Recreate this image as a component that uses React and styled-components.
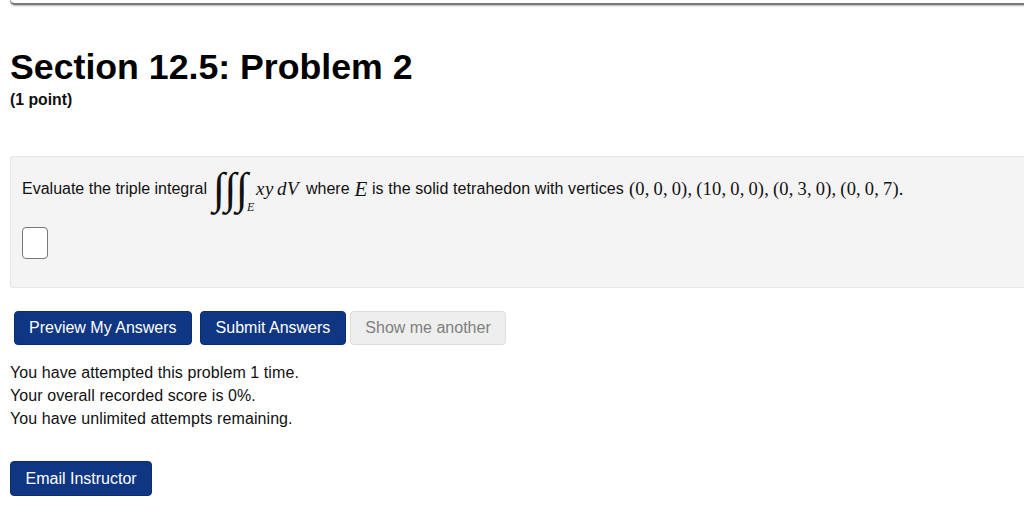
import styled, { createGlobalStyle } from "styled-components"

const Global = createGlobalStyle`
  html, body {
    margin: 0;
    padding: 0;
    background: #fff;
    overflow: hidden;
  }
  body {
    font-family: "Liberation Sans", Arial, sans-serif;
    color: #111;
  }
`

const App = () => {
  return (
    <Page>
      <Global />
      <TopEdge />
      <Heading>Section 12.5: Problem 2</Heading>
      <Points>(1 point)</Points>
      <ProblemBox>
        <Statement>
          Evaluate the triple integral
          <Integrals>
            <span>∫</span>
            <span>∫</span>
            <span>∫</span>
            <Sub>E</Sub>
          </Integrals>
          <MathVar>xy</MathVar>
          <MathVar $left="3px">dV</MathVar>
          <Text $left="7px">where</Text>
          <MathVar $left="5px" $size="21px">E</MathVar>
          <Text $left="4px" $track="0.08px">is the solid tetrahedon with vertices</Text>
          <MathNum>(0, 0, 0), (10, 0, 0), (0, 3, 0), (0, 0, 7).</MathNum>
        </Statement>
        <AnswerInput type="text" aria-label="answer" />
      </ProblemBox>
      <ButtonRow>
        <Button>Preview My Answers</Button>
        <Button $pad="15px">Submit Answers</Button>
        <GreyButton disabled>Show me another</GreyButton>
      </ButtonRow>
      <Status>
        <div>You have attempted this problem 1 time.</div>
        <div>Your overall recorded score is 0%.</div>
        <div>You have unlimited attempts remaining.</div>
      </Status>
      <EmailButton $pad="14.5px">Email Instructor</EmailButton>
    </Page>
  )
}

export default App

const Page = styled.div`
  width: 1024px;
  height: 529px;
  overflow: hidden;
  padding-left: 10px;
  box-sizing: border-box;
`
const TopEdge = styled.div`
  height: 3px;
  margin-right: -10px;
  background: #fff;
  border-left: 1px solid #999;
  border-bottom: 2px solid #777;
  border-bottom-left-radius: 5px;
  box-shadow: 0 1px 2px rgba(0, 0, 0, 0.3);
`
const Heading = styled.h1`
  margin: 42px 0 0;
  font-size: 35.7px;
  line-height: 40px;
  font-weight: 700;
  color: #000;
`
const Points = styled.div`
  margin-top: 4px;
  font-size: 15.8px;
  line-height: 18px;
  font-weight: 700;
  color: #111;
`
const ProblemBox = styled.div`
  margin-top: 47px;
  margin-right: -10px;
  height: 132px;
  box-sizing: border-box;
  padding: 11px 0 0 11px;
  background: #f4f4f4;
  border: 1px solid #e6e6e6;
  border-right: 0;
  border-radius: 3px 0 0 3px;
`
const Statement = styled.div`
  display: flex;
  align-items: center;
  height: 42px;
  font-size: 16px;
  color: #111;
  white-space: nowrap;
`
const Integrals = styled.span`
  position: relative;
  display: inline-flex;
  margin-left: 6px;
  margin-right: 5px;
  width: 38px;
  font-family: "Liberation Serif", serif;
  font-style: italic;
  font-size: 44px;
  line-height: 42px;
  color: #111;
  span {
    width: 11.5px;
  }
`
const Sub = styled.i`
  position: absolute;
  left: 34px;
  bottom: -3px;
  font-size: 12px;
  line-height: 12px;
`
const MathVar = styled.i`
  margin-left: ${(p) => p.$left || "0"};
  font-family: "Liberation Serif", serif;
  font-size: ${(p) => p.$size || "19px"};
  letter-spacing: 0.5px;
`
const Text = styled.span`
  margin-left: ${(p) => p.$left || "0"};
  letter-spacing: ${(p) => p.$track || "0"};
`
const MathNum = styled.span`
  margin-left: 5px;
  font-family: "Liberation Serif", serif;
  font-size: 18.5px;
  letter-spacing: 0.2px;
  word-spacing: -0.9px;
`
const AnswerInput = styled.input`
  display: block;
  margin-top: 17px;
  width: 26px;
  height: 32px;
  box-sizing: border-box;
  padding: 0;
  background: #fff;
  border: 1px solid #777;
  border-radius: 4px;
`
const ButtonRow = styled.div`
  display: flex;
  gap: 8px;
  margin-top: 23px;
  padding-left: 4px;
`
const Button = styled.button`
  display: block;
  height: 34px;
  padding: 0 ${(p) => p.$pad || "14px"};
  font-family: inherit;
  font-size: 16px;
  color: #fff;
  background: #0f3682;
  border: 1px solid #0b2d70;
  border-radius: 4px;
`
const GreyButton = styled(Button)`
  margin-left: -4px;
  color: #808080;
  background: #eeeeee;
  border-color: #dddddd;
`
const EmailButton = styled(Button)`
  height: 35px;
`
const Status = styled.div`
  margin: 16px 0 31px;
  font-size: 16px;
  line-height: 23px;
  letter-spacing: 0.08px;
  color: #111;
`
